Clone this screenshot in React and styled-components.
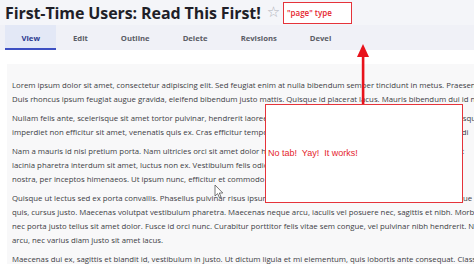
import styled, { createGlobalStyle } from "styled-components";

const GlobalStyle = createGlobalStyle`
  html, body {
    margin: 0;
    padding: 0;
    background: #ffffff;
    overflow: hidden;
  }
  body {
    font-family: "Open Sans", "Noto Sans", sans-serif;
  }
`;

const tabs = ["View", "Edit", "Outline", "Delete", "Revisions", "Devel"];

const paragraphs = [
  [
    "Lorem ipsum dolor sit amet, consectetur adipiscing elit. Sed feugiat enim at nulla bibendum semper tincidunt in metus. Praesent",
    "Duis rhoncus ipsum feugiat augue gravida, eleifend bibendum justo mattis. Quisque id placerat lacus. Mauris bibendum dui id nisl",
  ],
  [
    "Nullam felis ante, scelerisque sit amet tortor pulvinar, hendrerit laoreet nisi. Aliquam erat volutpat. Vivamus at sapien scelerisque",
    "imperdiet non efficitur sit amet, venenatis quis ex. Cras efficitur tempor nulla, vitae dignissim mauris hendrerit ut. Integer ordi",
  ],
  [
    "Nam a mauris id nisl pretium porta. Nam ultricies orci sit amet dolor hendrerit, non vulputate lectus tincidunt. Nunc vel mi et",
    "lacinia pharetra interdum sit amet, luctus non ex. Vestibulum felis odio, hendrerit ut dictum sed, tincidunt in neque. Donec",
    "nostra, per inceptos himenaeos. Ut ipsum nunc, efficitur et commodo a, mattis eget magna.",
  ],
  [
    "Quisque ut lectus sed ex porta convallis. Phasellus pulvinar risus ipsum, et pretium ipsum pellentesque vel. Nunc eu mi congue",
    "quis, cursus justo. Maecenas volutpat vestibulum pharetra. Maecenas neque arcu, iaculis vel posuere nec, sagittis et nibh. Morbi libero",
    "nec porta justo tellus sit amet dolor. Fusce id orci nunc. Curabitur porttitor felis vitae sem congue, vel pulvinar nibh hendrerit. Nulla",
    "arcu, nec varius diam justo sit amet lacus.",
  ],
  [
    "Maecenas dui ex, sagittis et blandit id, vestibulum in justo. Ut dictum ligula et mi elementum, quis lobortis ante consequat. Class",
    "aptent taciti sociosqu ad litora torquent per conubia nostra, per inceptos himenaeos. Duis eget nulla ut arcu dictum aliquet.",
  ],
];

const App = () => {
  return (
    <>
      <GlobalStyle />
      <Page>
        <Header>
          <TitleRow>
            <Title>First-Time Users: Read This First!</Title>
            <Star>☆</Star>
            <TypeNote>"page" type</TypeNote>
          </TitleRow>
          <Tabs>
            {tabs.map((tab, i) => (
              <Tab key={tab} $active={i === 0}>
                {tab}
              </Tab>
            ))}
          </Tabs>
        </Header>
        <Content>
          {paragraphs.map((lines, i) => (
            <Para key={i}>
              {lines.map((line, j) => (
                <Line key={j}>{line}</Line>
              ))}
            </Para>
          ))}
        </Content>

        <Arrow width="14" height="62" viewBox="0 0 14 62">
          <polygon points="7,0 13,13 1,13" fill="#e8121b" />
          <rect x="5.8" y="12" width="2.6" height="50" fill="#e8121b" />
        </Arrow>
        <NoteBox>No tab!&nbsp; Yay!&nbsp; It works!</NoteBox>
        <Cursor width="10" height="15" viewBox="0 0 10 15">
          <path
            d="M1 1 L1 12 L3.6 9.6 L5.4 13.6 L7 12.9 L5.3 9 L8.8 9 Z"
            fill="#fff"
            stroke="#555"
            strokeWidth="0.8"
            strokeLinejoin="round"
          />
        </Cursor>
      </Page>
    </>
  );
};

export default App;

const Page = styled.div`
  position: relative;
  width: 474px;
  height: 264px;
  overflow: hidden;
  background: #ffffff;
`;

const Header = styled.header`
  background: #f4f5f9;
  padding: 0 5px;
`;

const TitleRow = styled.div`
  display: flex;
  align-items: center;
  height: 25px;
`;

const Title = styled.h1`
  margin: 0;
  font-family: "Open Sans", sans-serif;
  font-size: 16px;
  font-weight: 700;
  color: #1f1f28;
  letter-spacing: -0.1px;
  white-space: nowrap;
`;

const Star = styled.span`
  margin-left: 6px;
  font-family: "DejaVu Sans", sans-serif;
  font-size: 15px;
  color: #b0b2b9;
  line-height: 1;
`;

const TypeNote = styled.div`
  margin-left: 3px;
  align-self: flex-start;
  margin-top: 2px;
  box-sizing: border-box;
  width: 69px;
  height: 22px;
  border: 1.5px solid #e5333a;
  padding: 4px 0 0 3px;
  color: #e5242c;
  font-size: 8px;
  font-weight: 600;
  white-space: nowrap;
  background: #fff;
`;

const Tabs = styled.nav`
  display: flex;
  height: 25px;
  background: #f0f1f7;
  margin: 0 -5px;
  padding: 0 5px;
`;

const Tab = styled.div`
  display: flex;
  align-items: center;
  padding: 0 16.5px;
  font-size: 7.7px;
  font-weight: 700;
  color: ${(p) => (p.$active ? "#2c3a8f" : "#5b5d66")};
  background: ${(p) => (p.$active ? "#e3e8f6" : "transparent")};
  box-shadow: ${(p) => (p.$active ? "inset 0 -2px 0 #3d4fc2" : "none")};
`;

const Content = styled.main`
  margin: 14px 0 0 7px;
  padding: 14px 0 0 5px;
  background: #f8f8f9;
  min-height: 220px;
`;

const Para = styled.p`
  margin: 0 0 5px;
  font-size: 7.8px;
  line-height: 14px;
  color: #3c3d44;
`;

const Line = styled.span`
  display: block;
  white-space: nowrap;
`;

const Arrow = styled.svg`
  position: absolute;
  left: 356px;
  top: 44px;
`;

const NoteBox = styled.div`
  position: absolute;
  left: 265px;
  top: 104px;
  box-sizing: border-box;
  width: 198px;
  height: 99px;
  display: flex;
  align-items: center;
  padding: 0 2px 2px;
  background: #ffffff;
  border: 1.5px solid #e5333a;
  color: #e5242c;
  font-family: "Liberation Sans", Arial, sans-serif;
  font-size: 9px;
`;

const Cursor = styled.svg`
  position: absolute;
  left: 214px;
  top: 184px;
`;
